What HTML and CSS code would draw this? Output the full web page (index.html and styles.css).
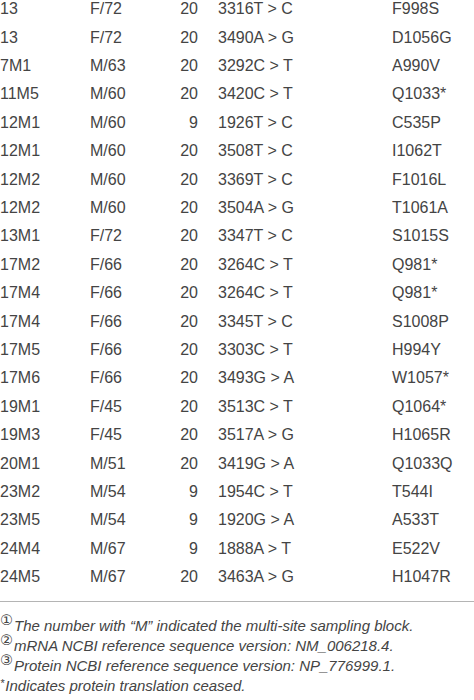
FILE: index.html
```html
<!DOCTYPE html>
<html>
<head>
<meta charset="utf-8">
<link rel="stylesheet" href="styles.css">
</head>
<body>
<div class="page">
  <div class="table">
    <div class="row"><span>13</span><span>F/72</span><span class="num">20</span><span class="mut">3316T &gt; C</span><span>F998S</span></div>
    <div class="row"><span>13</span><span>F/72</span><span class="num">20</span><span class="mut">3490A &gt; G</span><span>D1056G</span></div>
    <div class="row"><span>7M1</span><span>M/63</span><span class="num">20</span><span class="mut">3292C &gt; T</span><span>A990V</span></div>
    <div class="row"><span>11M5</span><span>M/60</span><span class="num">20</span><span class="mut">3420C &gt; T</span><span>Q1033*</span></div>
    <div class="row"><span>12M1</span><span>M/60</span><span class="num">9</span><span class="mut">1926T &gt; C</span><span>C535P</span></div>
    <div class="row"><span>12M1</span><span>M/60</span><span class="num">20</span><span class="mut">3508T &gt; C</span><span>I1062T</span></div>
    <div class="row"><span>12M2</span><span>M/60</span><span class="num">20</span><span class="mut">3369T &gt; C</span><span>F1016L</span></div>
    <div class="row"><span>12M2</span><span>M/60</span><span class="num">20</span><span class="mut">3504A &gt; G</span><span>T1061A</span></div>
    <div class="row"><span>13M1</span><span>F/72</span><span class="num">20</span><span class="mut">3347T &gt; C</span><span>S1015S</span></div>
    <div class="row"><span>17M2</span><span>F/66</span><span class="num">20</span><span class="mut">3264C &gt; T</span><span>Q981*</span></div>
    <div class="row"><span>17M4</span><span>F/66</span><span class="num">20</span><span class="mut">3264C &gt; T</span><span>Q981*</span></div>
    <div class="row"><span>17M4</span><span>F/66</span><span class="num">20</span><span class="mut">3345T &gt; C</span><span>S1008P</span></div>
    <div class="row"><span>17M5</span><span>F/66</span><span class="num">20</span><span class="mut">3303C &gt; T</span><span>H994Y</span></div>
    <div class="row"><span>17M6</span><span>F/66</span><span class="num">20</span><span class="mut">3493G &gt; A</span><span>W1057*</span></div>
    <div class="row"><span>19M1</span><span>F/45</span><span class="num">20</span><span class="mut">3513C &gt; T</span><span>Q1064*</span></div>
    <div class="row"><span>19M3</span><span>F/45</span><span class="num">20</span><span class="mut">3517A &gt; G</span><span>H1065R</span></div>
    <div class="row"><span>20M1</span><span>M/51</span><span class="num">20</span><span class="mut">3419G &gt; A</span><span>Q1033Q</span></div>
    <div class="row"><span>23M2</span><span>M/54</span><span class="num">9</span><span class="mut">1954C &gt; T</span><span>T544I</span></div>
    <div class="row"><span>23M5</span><span>M/54</span><span class="num">9</span><span class="mut">1920G &gt; A</span><span>A533T</span></div>
    <div class="row"><span>24M4</span><span>M/67</span><span class="num">9</span><span class="mut">1888A &gt; T</span><span>E522V</span></div>
    <div class="row"><span>24M5</span><span>M/67</span><span class="num">20</span><span class="mut">3463A &gt; G</span><span>H1047R</span></div>
  </div>
  <div class="notes">
    <p><sup class="mark">①</sup>The number with “M” indicated the multi-site sampling block.</p>
    <p><sup class="mark">②</sup>mRNA NCBI reference sequence version: NM_006218.4.</p>
    <p><sup class="mark">③</sup>Protein NCBI reference sequence version: NP_776999.1.</p>
    <p><span class="star">*</span>Indicates protein translation ceased.</p>
  </div>
</div>
</body>
</html>
```

FILE: styles.css
```css
html, body {
  margin: 0;
  padding: 0;
  background: #ffffff;
}
body {
  width: 474px;
  height: 700px;
  overflow: hidden;
  font-family: "Liberation Sans", Arial, sans-serif;
  color: #444444;
}
.page {
  width: 474px;
}
.table {
  margin-top: -4.7px;
  padding-bottom: 9.3px;
  border-bottom: 1px solid #b4b4b4;
}
.row {
  display: grid;
  grid-template-columns: 90px 80px 28px 194px 1fr;
  height: 28.4px;
  line-height: 28.4px;
  font-size: 16px;
  white-space: nowrap;
}
.row .num {
  text-align: right;
}
.row .mut {
  padding-left: 20px;
}
.notes {
  padding-top: 14px;
  font-size: 15px;
  font-style: italic;
}
.notes p {
  margin: 0;
  height: 20px;
  line-height: 20px;
  white-space: nowrap;
}
.mark {
  font-style: normal;
  font-family: "DejaVu Serif", "DejaVu Sans", serif;
  font-size: 14.5px;
  vertical-align: 6px;
  line-height: 0;
  margin: 0 1px 0 0;
}
.star {
  font-size: 11px;
  vertical-align: 4px;
  line-height: 0;
  margin-right: 1px;
}
```
